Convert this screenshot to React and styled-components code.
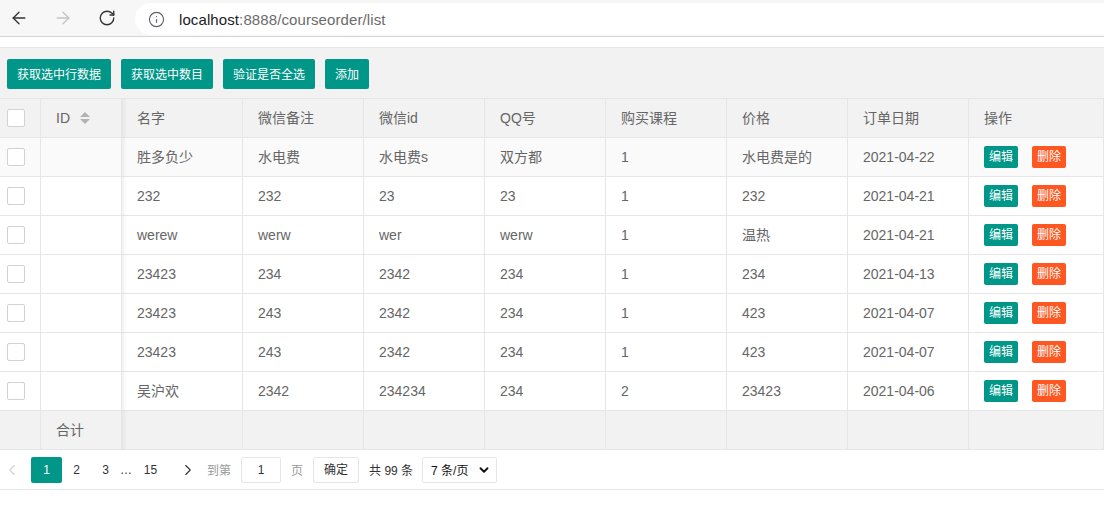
import React from "react";
import styled, { createGlobalStyle } from "styled-components";
import { ArrowLeft, ArrowRight, RotateCw, Info, ChevronLeft, ChevronRight, ChevronDown } from "lucide-react";

const GlobalStyle = createGlobalStyle`
	* { box-sizing: border-box; }
	body {
		margin: 0;
		background: #fff;
		font-family: "Liberation Sans", "Noto Sans CJK SC", sans-serif;
		color: #666;
	}
`;

const rows = [
	["胜多负少", "水电费", "水电费s", "双方都", "1", "水电费是的", "2021-04-22"],
	["232", "232", "23", "23", "1", "232", "2021-04-21"],
	["werew", "werw", "wer", "werw", "1", "温热", "2021-04-21"],
	["23423", "234", "2342", "234", "1", "234", "2021-04-13"],
	["23423", "243", "2342", "234", "1", "423", "2021-04-07"],
	["23423", "243", "2342", "234", "1", "423", "2021-04-07"],
	["吴沪欢", "2342", "234234", "234", "2", "23423", "2021-04-06"],
];

const headers = ["名字", "微信备注", "微信id", "QQ号", "购买课程", "价格", "订单日期", "操作"];

const App = () => {
	return (
		<>
			<GlobalStyle />
			<BrowserBar>
				<NavIcon><ArrowLeft size={20} strokeWidth={1.6} /></NavIcon>
				<NavIcon $off><ArrowRight size={20} strokeWidth={1.6} /></NavIcon>
				<NavIcon><RotateCw size={18} strokeWidth={1.8} /></NavIcon>
				<Address>
					<Info size={17} strokeWidth={1.6} color="#5f6368" />
					<Url>
						<b>localhost</b>:8888/courseorder/list
					</Url>
				</Address>
			</BrowserBar>
			<Gap />
			<Toolbar>
				<Btn>获取选中行数据</Btn>
				<Btn>获取选中数目</Btn>
				<Btn>验证是否全选</Btn>
				<Btn>添加</Btn>
			</Toolbar>
			<Table>
				<Row $head>
					<Cell><Check /></Cell>
					<Cell $fixed>
						ID
						<Sort>
							<i className="up" />
							<i className="down" />
						</Sort>
					</Cell>
					{headers.map((h) => (
						<Cell key={h}>{h}</Cell>
					))}
				</Row>
				{rows.map((r, i) => (
					<Row key={i} $hover={i === 0}>
						<Cell><Check /></Cell>
						<Cell $fixed />
						{r.map((v, j) => (
							<Cell key={j}>{v}</Cell>
						))}
						<Cell>
							<SmallBtn>编辑</SmallBtn>
							<SmallBtn $danger>删除</SmallBtn>
						</Cell>
					</Row>
				))}
				<Row $head>
					<Cell />
					<Cell $fixed>合计</Cell>
					{headers.map((h) => (
						<Cell key={h} />
					))}
				</Row>
			</Table>
			<Pager>
				<Arrow $off><ChevronLeft size={18} strokeWidth={1.5} /></Arrow>
				<PageNum $w={31} $current>1</PageNum>
				<PageNum $w={29}>2</PageNum>
				<PageNum $w={29}>3</PageNum>
				<Dots>…</Dots>
				<PageNum $w={37}>15</PageNum>
				<Arrow><ChevronRight size={18} strokeWidth={1.5} /></Arrow>
				<Label>到第</Label>
				<JumpInput defaultValue="1" />
				<Label>页</Label>
				<Confirm>确定</Confirm>
				<Count>共 99 条</Count>
				<Limit>
					7 条/页
					<ChevronDown size={14} strokeWidth={3.2} color="#111" />
				</Limit>
			</Pager>
		</>
	);
};

const BrowserBar = styled.div`
	height: 37px;
	display: flex;
	align-items: center;
	background: #f7f7f7;
	border-bottom: 1px solid #d4d4d4;
	padding-left: 9px;
`;

const NavIcon = styled.span`
	width: 20px;
	margin-right: 24px;
	display: flex;
	justify-content: center;
	color: ${(p) => (p.$off ? "#c4c4c4" : "#333")};
	&:nth-of-type(3) {
		margin-right: 18px;
	}
`;

const Address = styled.div`
	flex: 1;
	height: 32px;
	margin-top: 2px;
	background: #fff;
	border-radius: 16px 0 0 16px;
	display: flex;
	align-items: center;
	gap: 14px;
	padding-left: 13px;
`;

const Url = styled.span`
	font-size: 15px;
	color: #6b6b6b;
	letter-spacing: 0.1px;
	b {
		font-weight: normal;
		color: #202124;
	}
`;

const Gap = styled.div`
	height: 10px;
	background: #fff;
`;

const Toolbar = styled.div`
	height: 51px;
	background: #f2f2f2;
	border-top: 1px solid #e6e6e6;
	display: flex;
	align-items: center;
	gap: 10px;
	padding: 1px 7px 0;
`;

const Btn = styled.button`
	height: 30px;
	padding: 0 10px;
	border: none;
	border-radius: 2px;
	background: #009688;
	color: #fff;
	font-family: inherit;
	font-size: 12px;
	cursor: pointer;
`;

const Table = styled.div`
	display: flex;
	flex-direction: column;
	border-top: 1px solid #e6e6e6;
	overflow: hidden;
`;

const Row = styled.div`
	display: grid;
	grid-template-columns: 40px 81px repeat(7, 121px) 1fr;
	height: 39px;
	padding-left: 1px;
	background: ${(p) => (p.$head ? "#f2f2f2" : p.$hover ? "#fafafa" : "#fff")};
	border-bottom: 1px solid #e6e6e6;
	font-size: 14px;
	line-height: 20px;
	color: #666;
`;

const Cell = styled.div`
	display: flex;
	align-items: center;
	padding: 0 15px 1px;
	border-right: 1px solid #e6e6e6;
	white-space: nowrap;
	position: relative;
	&:first-child {
		padding: 0 6px;
	}
	${(p) =>
		p.$fixed &&
		`
		&::after {
			content: "";
			position: absolute;
			top: 0;
			bottom: -1px;
			right: -6px;
			width: 5px;
			background: linear-gradient(to right, rgba(0, 0, 0, 0.05), rgba(0, 0, 0, 0));
			z-index: 1;
		}
	`}
`;

const Check = styled.span`
	width: 18px;
	height: 18px;
	border: 1px solid #d2d2d2;
	border-radius: 2px;
	background: #fff;
`;

const Sort = styled.span`
	display: inline-flex;
	flex-direction: column;
	gap: 2px;
	margin-left: 10px;
	i {
		width: 0;
		height: 0;
		border-left: 5px solid transparent;
		border-right: 5px solid transparent;
	}
	.up {
		border-bottom: 5px solid #b2b2b2;
	}
	.down {
		border-top: 5px solid #b2b2b2;
	}
`;

const SmallBtn = styled.span`
	height: 22px;
	line-height: 22px;
	padding: 0 5px;
	margin-right: 14px;
	border-radius: 2px;
	font-size: 12px;
	color: #fff;
	background: ${(p) => (p.$danger ? "#ff5722" : "#009688")};
`;

const Pager = styled.div`
	height: 40px;
	display: flex;
	align-items: center;
	padding-left: 3px;
	border-bottom: 1px solid #e6e6e6;
	font-size: 12px;
	color: #333;
`;

const Arrow = styled.span`
	display: flex;
	align-items: center;
	justify-content: center;
	width: 18px;
	margin-right: 10px;
	margin-left: ${(p) => (p.$off ? "0" : "10px")};
	color: ${(p) => (p.$off ? "#d2d2d2" : "#333")};
`;

const PageNum = styled.span`
	height: 26px;
	line-height: 26px;
	width: ${(p) => p.$w}px;
	text-align: center;
	border-radius: 2px;
	background: ${(p) => (p.$current ? "#009688" : "transparent")};
	color: ${(p) => (p.$current ? "#fff" : "#333")};
`;

const Dots = styled.span`
	width: 12px;
	text-align: center;
	color: #333;
`;

const Label = styled.span`
	color: #999;
	margin: 0 10px 0 0;
`;

const JumpInput = styled.input`
	width: 40px;
	height: 26px;
	border: 1px solid #e6e6e6;
	border-radius: 2px;
	text-align: center;
	font-family: inherit;
	font-size: 12px;
	color: #333;
	margin-right: 10px;
	outline: none;
`;

const Confirm = styled.span`
	height: 26px;
	line-height: 24px;
	padding: 0 10px;
	border: 1px solid #e6e6e6;
	border-radius: 2px;
	background: #fff;
	color: #333;
`;

const Count = styled.span`
	margin: 0 9px 0 10px;
	color: #333;
`;

const Limit = styled.span`
	width: 75px;
	height: 26px;
	border: 1px solid #e6e6e6;
	border-radius: 2px;
	display: flex;
	align-items: center;
	justify-content: space-between;
	padding: 0 5px 0 8px;
	color: #111;
`;

export default App;
